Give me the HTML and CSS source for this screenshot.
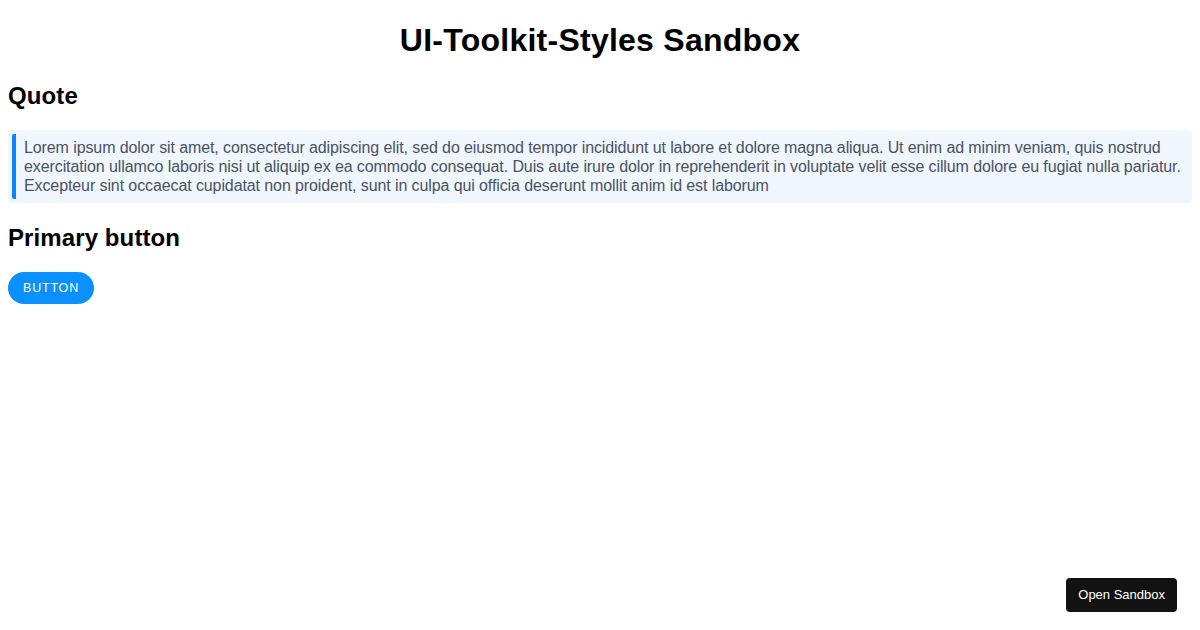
FILE: index.html
```html
<!DOCTYPE html>
<html lang="en">
<head>
    <meta charset="UTF-8">
    <meta name="viewport" content="width=device-width, initial-scale=1.0">
    <title>UI-Toolkit-Styles Sandbox</title>
    <link rel="stylesheet" href="styles.css">
</head>
<body>
    <h1 class="title">UI-Toolkit-Styles Sandbox</h1>

    <h2>Quote</h2>
    <blockquote class="quote">
        <div class="quote-body">
            Lorem ipsum dolor sit amet, consectetur adipiscing elit, sed do eiusmod tempor incididunt ut labore et dolore magna aliqua. Ut enim ad minim veniam, quis nostrud exercitation ullamco laboris nisi ut aliquip ex ea commodo consequat. Duis aute irure dolor in reprehenderit in voluptate velit esse cillum dolore eu fugiat nulla pariatur. Excepteur sint occaecat cupidatat non proident, sunt in culpa qui officia deserunt mollit anim id est laborum
        </div>
    </blockquote>

    <h2>Primary button</h2>
    <button class="btn-primary">Button</button>

    <a class="open-sandbox" href="#">Open Sandbox</a>
</body>
</html>
```

FILE: styles.css
```css
body {
    font-family: "Liberation Sans", Arial, sans-serif;
    margin: 8px;
    color: #000;
    background: #fff;
}

.title {
    text-align: center;
    font-size: 32px;
    letter-spacing: 0.25px;
    margin: 14px 0 23px;
}

h2 {
    font-size: 24px;
    letter-spacing: 0.1px;
    margin: 20px 0;
}

.quote {
    margin: 20px 0 21px;
    padding: 4px;
    background: #eff6fe;
    border-radius: 4px;
}

.quote-body {
    border-left: 4px solid #0a84ff;
    border-radius: 2px;
    padding: 4px 0 4px 8px;
    font-size: 16px;
    line-height: 19px;
    letter-spacing: -0.1px;
    color: #4b5261;
}

.btn-primary {
    display: inline-block;
    height: 32px;
    padding: 0 15px;
    border: none;
    border-radius: 16px;
    background: #0a90ff;
    color: #fff;
    font-family: "Liberation Sans", Arial, sans-serif;
    font-size: 12.5px;
    letter-spacing: 0.8px;
    text-transform: uppercase;
    cursor: pointer;
}

.open-sandbox {
    position: fixed;
    right: 23px;
    bottom: 18px;
    padding: 9px 12px;
    background: #121212;
    color: #fff;
    font-size: 13px;
    line-height: 16px;
    border-radius: 4px;
    text-decoration: none;
}
```
